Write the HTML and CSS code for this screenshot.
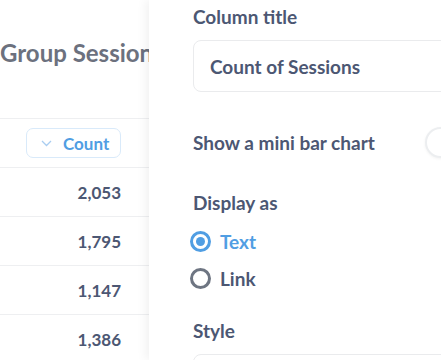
FILE: index.html
```html
<!DOCTYPE html>
<html>
<head>
<meta charset="utf-8">
<link rel="stylesheet" href="styles.css">
</head>
<body>
<div class="page">
  <section class="table-side">
    <h1 class="table-title">Group Sessions</h1>
    <div class="row header-row">
      <button class="col-btn">
        <svg class="chev" width="11" height="7" viewBox="0 0 11 7"><path d="M1 1 L5.5 5.5 L10 1" fill="none" stroke="#a9cdf1" stroke-width="1.3"/></svg>
        <span>Count</span>
      </button>
    </div>
    <div class="row"><span class="num">2,053</span></div>
    <div class="row"><span class="num">1,795</span></div>
    <div class="row"><span class="num">1,147</span></div>
    <div class="row"><span class="num">1,386</span></div>
  </section>
  <aside class="panel">
    <div class="panel-inner">
      <div class="label first">Column title</div>
      <div class="input"><span>Count of Sessions</span></div>
      <div class="toggle-row">
        <span class="label">Show a mini bar chart</span>
        <span class="toggle"></span>
      </div>
      <div class="label display">Display as</div>
      <div class="radio checked"><span class="dot"></span><span>Text</span></div>
      <div class="radio"><span class="dot"></span><span>Link</span></div>
      <div class="label style-label">Style</div>
      <div class="input short"></div>
    </div>
  </aside>
</div>
</body>
</html>
```
FILE: styles.css
```css
html, body {
  margin: 0;
  padding: 0;
  background: #fff;
  overflow: hidden;
  font-family: Lato, "Noto Sans", sans-serif;
}
.page {
  display: flex;
  width: 441px;
  height: 360px;
  overflow: hidden;
}
.table-side {
  width: 149px;
  flex: 0 0 149px;
  overflow: hidden;
}
.table-title {
  margin: 0;
  padding-top: 39px;
  height: 79px;
  line-height: 28px;
  font-size: 24px;
  font-weight: 700;
  color: #6c717e;
  white-space: nowrap;
  box-sizing: border-box;
  height: 118px;
}
.row {
  height: 48px;
  border-top: 1px solid #eeeff1;
  display: flex;
  align-items: center;
  justify-content: flex-end;
  padding-right: 28px;
}
.col-btn {
  display: flex;
  align-items: center;
  gap: 11px;
  height: 30px;
  box-sizing: border-box;
  width: 95px;
  padding: 0 0 0 14px;
  border: 1px solid #d9eafa;
  border-radius: 7px;
  background: #fff;
  font-family: inherit;
  font-size: 17px;
  font-weight: 700;
  color: #509ee3;
}
.num {
  font-size: 17px;
  font-weight: 700;
  color: #4c5773;
}
.panel {
  flex: 1 0 auto;
  position: relative;
  z-index: 1;
  background: #fff;
  box-shadow: -3px 0 10px rgba(0, 0, 0, 0.06);
  padding-left: 44px;
}
.panel-inner {
  width: 284px;
  display: flex;
  flex-direction: column;
}
.label {
  font-size: 19px;
  font-weight: 700;
  line-height: 22px;
  color: #4c5773;
  white-space: nowrap;
}
.first {
  margin-top: 6px;
}
.input {
  margin-top: 12px;
  height: 52px;
  box-sizing: border-box;
  border: 1px solid #eaebed;
  border-radius: 8px;
  display: flex;
  align-items: center;
  padding-left: 16px;
  font-size: 19px;
  font-weight: 700;
  color: #4c5773;
}
.toggle-row {
  margin-top: 35px;
  height: 31px;
  display: flex;
  align-items: center;
  justify-content: space-between;
}
.toggle {
  width: 52px;
  height: 31px;
  box-sizing: border-box;
  border: 2px solid #eceef0;
  border-radius: 16px;
  background: #fff;
  box-shadow: 0 1px 3px rgba(0,0,0,0.05);
}
.display {
  margin-top: 34px;
}
.radio {
  margin-top: 17px;
  margin-left: -3px;
  height: 20px;
  display: flex;
  align-items: center;
  gap: 9px;
  font-size: 19px;
  font-weight: 700;
  color: #4c5773;
}
.radio + .radio {
  margin-top: 17px;
}
.radio .dot {
  width: 21px;
  height: 21px;
  box-sizing: border-box;
  border: 3px solid #6e7582;
  border-radius: 50%;
  display: flex;
  align-items: center;
  justify-content: center;
}
.radio.checked {
  color: #509ee3;
}
.radio.checked .dot {
  border-color: #509ee3;
}
.radio.checked .dot::after {
  content: "";
  width: 9px;
  height: 9px;
  border-radius: 50%;
  background: #509ee3;
}
.style-label {
  margin-top: 32px;
}
.short {
  margin-top: 12px;
}
```
